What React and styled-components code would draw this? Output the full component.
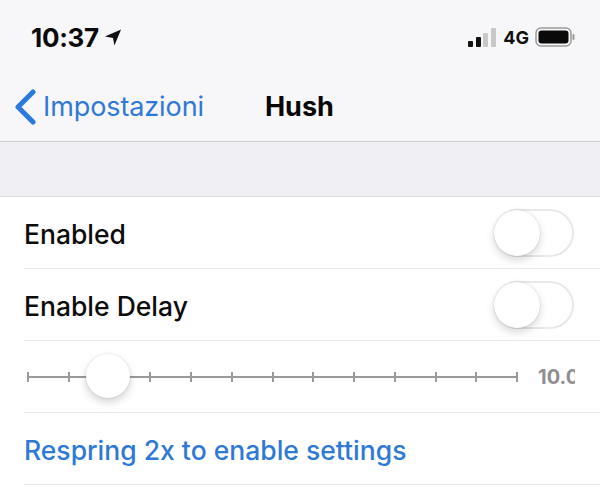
import styled, { createGlobalStyle } from "styled-components";

const GlobalStyle = createGlobalStyle`
  html, body {
    margin: 0;
    padding: 0;
    background: #fff;
    font-family: Inter, "Liberation Sans", sans-serif;
    overflow: hidden;
  }
`;

const Page = styled.div`
  width: 600px;
  height: 487px;
  overflow: hidden;
  background: #fff;
`;

const Header = styled.header`
  height: 141px;
  background: #f7f7f9;
  border-bottom: 1px solid #d0d0d4;
  display: flex;
  flex-direction: column;
`;

const StatusBar = styled.div`
  height: 74px;
  padding: 0 25px 0 31px;
  display: flex;
  align-items: center;
  justify-content: space-between;
`;

const Time = styled.div`
  display: flex;
  align-items: center;
  gap: 5px;
  font-size: 26px;
  font-weight: 700;
  color: #0a0a0a;
  letter-spacing: -0.3px;
`;

const StatusRight = styled.div`
  display: flex;
  align-items: center;
  gap: 6px;
`;

const Network = styled.span`
  font-size: 18px;
  font-weight: 700;
  color: #111;
`;

const NavBar = styled.nav`
  height: 67px;
  display: flex;
  align-items: center;
  padding: 0 0 2px 14px;
  box-sizing: border-box;
  gap: 7px;
`;

const BackLabel = styled.span`
  font-size: 27px;
  color: #2f79d6;
  letter-spacing: -0.1px;
`;

const NavTitle = styled.span`
  margin-left: 54px;
  font-size: 27px;
  font-weight: 700;
  color: #060606;
`;

const Band = styled.div`
  height: 54px;
  background: #efeff4;
  border-bottom: 1px solid #dededf;
`;

const Row = styled.div`
  height: 71px;
  margin-left: 24px;
  padding-right: 26px;
  border-bottom: 1px solid #e8e8ea;
  display: flex;
  align-items: center;
  justify-content: space-between;
`;

const Label = styled.span`
  padding-top: 2px;
  font-size: 26.5px;
  font-weight: 500;
  color: ${(p) => (p.$link ? "#2f79d6" : "#0c0c0c")};
`;

const Switch = styled.div`
  width: 80px;
  height: 48px;
  box-sizing: border-box;
  border: 2px solid #e8e8ea;
  border-radius: 24px;
  background: #fff;
  position: relative;
`;

const Knob = styled.div`
  position: absolute;
  left: -2px;
  top: -1px;
  width: 46px;
  height: 46px;
  border-radius: 50%;
  background: #fff;
  box-shadow: 0 4px 8px rgba(0, 0, 0, 0.16), 0 0 2px rgba(0, 0, 0, 0.16);
`;

const SliderRow = styled(Row)`
  padding-right: 25px;
  gap: 20px;
  justify-content: flex-start;
`;

const Track = styled.div`
  width: 492px;
  margin-left: 3px;
  height: 10px;
  position: relative;
  display: flex;
  justify-content: space-between;
  background: linear-gradient(#9a9a9a, #9a9a9a) center / 100% 2px no-repeat;
`;

const Tick = styled.i`
  display: block;
  width: 2px;
  height: 10px;
  background: #9a9a9a;
`;

const Thumb = styled.div`
  position: absolute;
  left: 59px;
  top: -18px;
  width: 44px;
  height: 44px;
  border-radius: 50%;
  background: #fff;
  box-shadow: 0 4px 8px rgba(0, 0, 0, 0.18), 0 0 2px rgba(0, 0, 0, 0.12);
`;

const Value = styled.span`
  width: 37px;
  overflow: hidden;
  white-space: nowrap;
  font-size: 20px;
  font-weight: 700;
  color: #8e8e93;
`;

const Arrow = () => (
  <svg width="18" height="19" viewBox="0 0 19 19">
    <path d="M1 8.5 18 1 11 18 9.5 10z" fill="#111" />
  </svg>
);

const Signal = () => (
  <svg width="30" height="19" viewBox="0 0 30 19">
    <rect x="1" y="13" width="5" height="6" rx="1" fill="#111" />
    <rect x="9" y="9" width="5" height="10" rx="1" fill="#111" />
    <rect x="16" y="5" width="5" height="14" rx="1" fill="#c8c8c8" />
    <rect x="24" y="0" width="5" height="19" rx="1" fill="#c8c8c8" />
  </svg>
);

const Battery = () => (
  <svg width="40" height="20" viewBox="0 0 40 20">
    <rect x="1" y="1" width="35" height="18" rx="5" fill="none" stroke="#9a9a9a" strokeWidth="1.5" />
    <rect x="3.5" y="3.5" width="30" height="13" rx="3" fill="#0a0a0a" />
    <rect x="37.5" y="7" width="2" height="6" rx="1" fill="#9a9a9a" />
  </svg>
);

const Chevron = () => (
  <svg width="22" height="36" viewBox="0 0 22 36">
    <path d="M19 3 4 18l15 15" fill="none" stroke="#2a7ade" strokeWidth="5" strokeLinecap="round" strokeLinejoin="round" />
  </svg>
);

export default function App() {
  const ticks = Array.from({ length: 13 });

  return (
    <Page>
      <GlobalStyle />
      <Header>
        <StatusBar>
          <Time>
            10:37
            <Arrow />
          </Time>
          <StatusRight>
            <Signal />
            <Network>4G</Network>
            <Battery />
          </StatusRight>
        </StatusBar>
        <NavBar>
          <Chevron />
          <BackLabel>Impostazioni</BackLabel>
          <NavTitle>Hush</NavTitle>
        </NavBar>
      </Header>
      <Band />
      <Row>
        <Label>Enabled</Label>
        <Switch>
          <Knob />
        </Switch>
      </Row>
      <Row>
        <Label>Enable Delay</Label>
        <Switch>
          <Knob />
        </Switch>
      </Row>
      <SliderRow>
        <Track>
          {ticks.map((_, i) => (
            <Tick key={i} />
          ))}
          <Thumb />
        </Track>
        <Value>10.00</Value>
      </SliderRow>
      <Row>
        <Label $link>Respring 2x to enable settings</Label>
      </Row>
    </Page>
  );
}
